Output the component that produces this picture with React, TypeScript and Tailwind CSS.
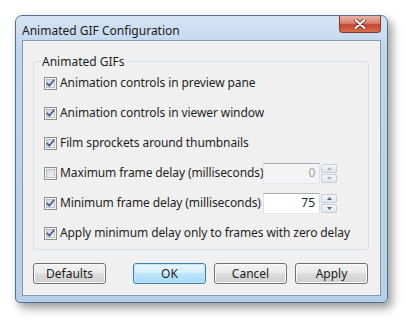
import React from "react";

const font = { fontFamily: '"Noto Sans", "Open Sans", sans-serif' };

function CheckBox({ checked }: { checked: boolean }) {
  return (
    <svg width="13" height="13" viewBox="0 0 13 13" className="shrink-0">
      <defs>
        <linearGradient id="cbin" x1="0" y1="0" x2="1" y2="1">
          <stop offset="0" stopColor="#d4d4d4" />
          <stop offset="1" stopColor="#f7f7f7" />
        </linearGradient>
      </defs>
      <rect x="0.5" y="0.5" width="12" height="12" fill="#f4f4f4" stroke="#8e8f8f" />
      <rect x="2.5" y="2.5" width="8" height="8" fill="url(#cbin)" stroke="#bdbdbd" strokeWidth="1" />
      {checked && (
        <path d="M3.2 6.4 L5.3 8.8 L9.8 3.2" fill="none" stroke="#3f5a94" strokeWidth="1.7" strokeLinejoin="round" strokeLinecap="round" />
      )}
    </svg>
  );
}

function Row({ label, checked, children }: { label: string; checked: boolean; children?: React.ReactNode }) {
  return (
    <div className="flex h-[30px] w-[293px] items-center">
      <CheckBox checked={checked} />
      <span className="ml-[3px] whitespace-nowrap text-[12px] tracking-[-0.1px] text-[#1e1e1e]">{label}</span>
      {children && <div className="ml-auto">{children}</div>}
    </div>
  );
}

function Arrow({ up, disabled }: { up: boolean; disabled?: boolean }) {
  return (
    <div className="flex flex-1 items-center justify-center rounded-[2px] border border-[#c8ccd4] bg-gradient-to-b from-[#f3f6fa] to-[#dfe7f0]">
      <svg width="5" height="3" viewBox="0 0 5 3">
        <path d={up ? "M0 3 L2.5 0 L5 3 Z" : "M0 0 L2.5 3 L5 0 Z"} fill={disabled ? "#a8b0bc" : "#4d6185"} />
      </svg>
    </div>
  );
}

function Spin({ value, disabled }: { value: string; disabled?: boolean }) {
  return (
    <div className="flex h-[21px] w-[74px] items-stretch">
      <div
        className={`flex flex-1 items-center justify-end border border-[#abadb3] border-b-[#e3e9ef] border-l-[#e2e3ea] border-r-[#dbdfe6] pr-[4px] text-[12px] ${
          disabled ? "bg-[#f4f4f4] text-[#a0a0a0]" : "bg-white text-[#1e1e1e]"
        }`}
      >
        {value}
      </div>
      <div className="ml-[1px] flex w-[16px] flex-col gap-[1px] py-[1px]">
        <Arrow up disabled={disabled} />
        <Arrow up={false} disabled={disabled} />
      </div>
    </div>
  );
}

function Btn({ label, primary }: { label: string; primary?: boolean }) {
  return (
    <div
      className={`flex h-[21px] w-[73px] items-center justify-center rounded-[3px] border text-[12px] text-[#1e1e1e] ${
        primary
          ? "border-[#3c7fb1] bg-[linear-gradient(#eaf6fd_0%,#d9f0fc_45%,#bee6fd_50%,#a7d9f5_100%)] shadow-[inset_0_0_0_1px_#bfe6fa]"
          : "border-[#707070] bg-[linear-gradient(#f2f2f2_0%,#ebebeb_45%,#dddddd_50%,#cfcfcf_100%)] shadow-[inset_0_0_0_1px_#fbfbfb]"
      }`}
    >
      {label}
    </div>
  );
}

export default function App() {
  return (
    <div className="h-[322px] w-[406px] overflow-hidden bg-white pl-[15px] pt-[15px]" style={font}>
      <div className="flex h-[288px] w-[373px] flex-col rounded-t-[7px] rounded-b-[5px] border border-[#52708e] bg-[linear-gradient(180deg,#d5e4f3_0%,#bfd5ec_12%,#b7cfe8_100%)] shadow-[4px_5px_10px_rgba(0,0,0,0.4)]">
        <div className="flex h-[24px] items-start">
          <span className="ml-[6px] mt-[6px] text-[12px] text-[#1b1b1b]">Animated GIF Configuration</span>
          <div className="ml-auto mr-[6px] flex h-[17px] w-[42px] items-center justify-center rounded-b-[4px] border border-t-0 border-[#7a3a2f] bg-[linear-gradient(#eab3a4_0%,#d9826d_45%,#c7432b_55%,#d9704f_100%)]">
            <svg width="12" height="10" viewBox="0 0 12 10">
              <path d="M1.5 1 L10.5 9 M10.5 1 L1.5 9" stroke="#5a2a22" strokeWidth="3.6" strokeLinecap="round" />
              <path d="M1.5 1 L10.5 9 M10.5 1 L1.5 9" stroke="#ffffff" strokeWidth="2" strokeLinecap="round" />
            </svg>
          </div>
        </div>
        <div className="mx-[6px] mb-[6px] flex flex-1 flex-col border border-[#8398af] bg-[#f0f0f0] px-[10px] pt-[20px]">
          <div className="relative h-[189px] w-[336px] rounded-[3px] border border-[#d5dfe5] px-[10px] pt-[6px]">
            <span className="absolute left-[7px] top-[-9px] bg-[#f0f0f0] px-[1px] text-[12px] text-[#1e1e1e]">Animated GIFs</span>
            <Row label="Animation controls in preview pane" checked />
            <Row label="Animation controls in viewer window" checked />
            <Row label="Film sprockets around thumbnails" checked />
            <Row label="Maximum frame delay (milliseconds)" checked={false}>
              <Spin value="0" disabled />
            </Row>
            <Row label="Minimum frame delay (milliseconds)" checked>
              <Spin value="75" />
            </Row>
            <Row label="Apply minimum delay only to frames with zero delay" checked />
          </div>
          <div className="mt-[13px] flex">
            <Btn label="Defaults" />
            <div className="ml-[27px] flex gap-[8px]">
              <Btn label="OK" primary />
              <Btn label="Cancel" />
              <Btn label="Apply" />
            </div>
          </div>
        </div>
      </div>
    </div>
  );
}
